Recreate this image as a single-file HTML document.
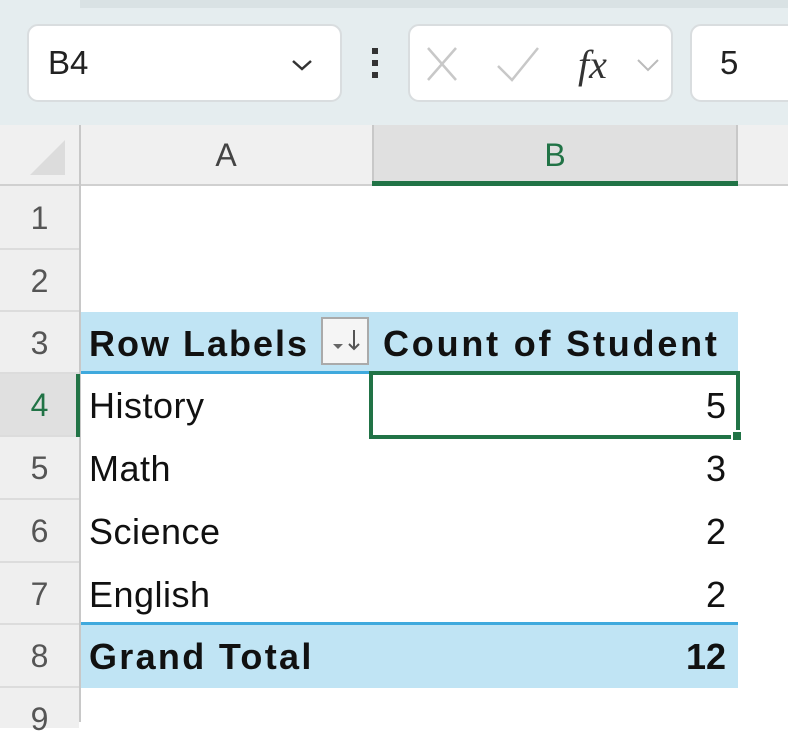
<!DOCTYPE html>
<html><head><style>
body{margin:0;width:788px;height:722px;overflow:hidden;background:#fff;font-family:"Liberation Sans",sans-serif;position:relative}
.a{position:absolute}
.tb{left:0;top:0;width:788px;height:125px;background:#e5edef}
.box{background:#fff;border:2px solid #d9dddf;border-radius:11px;box-sizing:border-box}
.rh{left:0;width:79px;background:#efefef;color:#555;font-size:32px;text-align:center;border-bottom:2px solid #dcdcdc;box-sizing:border-box}
.cell{font-size:36px;color:#111;line-height:63px;white-space:nowrap}
.b{font-weight:bold;font-size:36px;letter-spacing:0.6px}
</style></head><body>
<div class="a tb"></div>
<div class="a" style="left:80px;top:0;width:708px;height:8px;background:#d9e2e4"></div>
<div class="a box" style="left:27px;top:24px;width:315px;height:78px"></div>
<div class="a" style="left:48px;top:44px;font-size:33px;color:#222">B4</div>
<svg class="a" style="left:290px;top:58px" width="24" height="14"><path d="M3 3 L12 11 L21 3" fill="none" stroke="#333" stroke-width="2.5"/></svg>
<div class="a" style="left:372px;top:48px;width:6px;height:6px;background:#333"></div>
<div class="a" style="left:372px;top:60px;width:6px;height:6px;background:#333"></div>
<div class="a" style="left:372px;top:72px;width:6px;height:6px;background:#333"></div>
<div class="a box" style="left:408px;top:24px;width:265px;height:78px"></div>
<svg class="a" style="left:420px;top:40px" width="250" height="50"><path d="M8 8 L36 40 M36 8 L8 40" stroke="#c8c8c8" stroke-width="2.5"/><path d="M78 26 L92 40 L118 8" fill="none" stroke="#c8c8c8" stroke-width="2.5"/>
<text x="158" y="38" font-family="Liberation Serif" font-style="italic" font-size="40" fill="#333">fx</text>
<path d="M218 20 L228 30 L238 20" fill="none" stroke="#bbb" stroke-width="2"/></svg>
<div class="a box" style="left:690px;top:24px;width:120px;height:78px"></div>
<div class="a" style="left:720px;top:44px;font-size:33px;color:#222">5</div>
<div class="a" style="left:0;top:125px;width:788px;height:61px;background:#f0f0f0;border-bottom:2px solid #d0d0d0;box-sizing:border-box"></div>
<svg class="a" style="left:20px;top:135px" width="50" height="45"><path d="M45 5 L45 40 L10 40 Z" fill="#dcdcdc"/></svg>
<div class="a" style="left:79px;top:125px;width:2px;height:597px;background:#c8c8c8"></div>
<div class="a" style="left:80px;top:125px;width:292px;height:61px;line-height:60px;text-align:center;font-size:32px;color:#444">A</div>
<div class="a" style="left:372px;top:125px;width:366px;height:61px;background:#e0e0e0;border-left:2px solid #c8c8c8;border-right:2px solid #c8c8c8;box-sizing:border-box;line-height:60px;text-align:center;font-size:32px;color:#217346">B</div>
<div class="a" style="left:372px;top:181px;width:366px;height:5px;background:#217346"></div>
<div class="a rh" style="top:186px;height:64px;line-height:64px">1</div>
<div class="a rh" style="top:250px;height:62px;line-height:62px">2</div>
<div class="a rh" style="top:312px;height:62px;line-height:62px">3</div>
<div class="a rh" style="top:374px;height:63px;line-height:63px;background:#e0e0e0;color:#217346">4</div>
<div class="a" style="left:76px;top:374px;width:4px;height:63px;background:#217346"></div>
<div class="a rh" style="top:437px;height:63px;line-height:63px">5</div>
<div class="a rh" style="top:500px;height:63px;line-height:63px">6</div>
<div class="a rh" style="top:563px;height:62px;line-height:62px">7</div>
<div class="a rh" style="top:625px;height:63px;line-height:63px">8</div>
<div class="a rh" style="top:688px;height:40px;line-height:63px;border:none">9</div>
<div class="a" style="left:81px;top:312px;width:657px;height:59px;background:#c0e4f4;border-bottom:3px solid #3fa9dd"></div>
<div class="a cell b" style="left:89px;top:312px;letter-spacing:2px">Row Labels</div>
<div class="a" style="left:321px;top:317px;width:48px;height:48px;background:#f5f5f5;border:2px solid #aaa;box-sizing:border-box"></div>
<svg class="a" style="left:323px;top:319px" width="44" height="44"><path d="M10 25 L20 25 L15 30 Z" fill="#666"/><path d="M31 11 L31 30 M26 25 L31 30 L36 25" fill="none" stroke="#555" stroke-width="2"/></svg>
<div class="a cell b" style="left:383px;top:312px;letter-spacing:2.8px">Count of Student</div>
<div class="a cell" style="left:89px;top:374px;letter-spacing:0.5px">History</div>
<div class="a cell" style="left:89px;top:437px;letter-spacing:0.5px">Math</div>
<div class="a cell" style="left:89px;top:500px;letter-spacing:0.5px">Science</div>
<div class="a cell" style="left:89px;top:563px;letter-spacing:0.5px">English</div>
<div class="a cell" style="left:372px;top:374px;width:354px;text-align:right">5</div>
<div class="a cell" style="left:372px;top:437px;width:354px;text-align:right">3</div>
<div class="a cell" style="left:372px;top:500px;width:354px;text-align:right">2</div>
<div class="a cell" style="left:372px;top:563px;width:354px;text-align:right">2</div>
<div class="a" style="left:81px;top:622px;width:657px;height:66px;background:#c0e4f4;border-top:3px solid #3fa9dd;box-sizing:border-box"></div>
<div class="a cell b" style="left:89px;top:625px;letter-spacing:2.3px">Grand Total</div>
<div class="a cell b" style="left:372px;top:625px;width:354px;text-align:right;letter-spacing:0">12</div>
<div class="a" style="left:369px;top:371px;width:371px;height:68px;border:4px solid #217346;box-sizing:border-box"></div>
<div class="a" style="left:731px;top:430px;width:12px;height:12px;background:#217346;border:2px solid #fff;box-sizing:border-box"></div>
</body></html>
